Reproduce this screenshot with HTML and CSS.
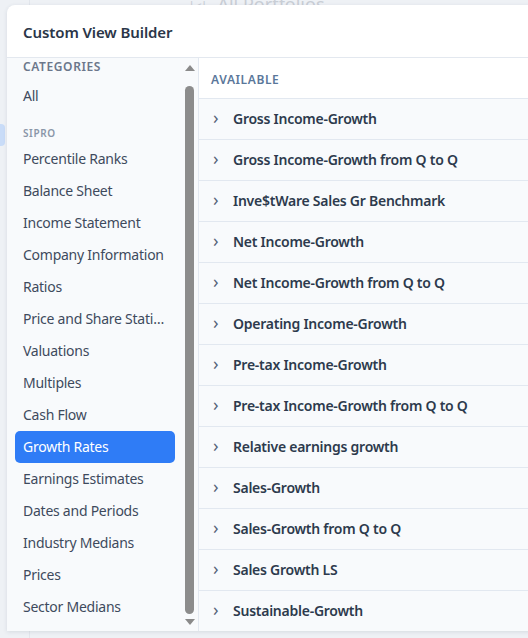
FILE: index.html
```html
<!DOCTYPE html>
<html lang="en">
    <head>
        <title>Custom View Builder</title>
        <meta charset="utf-8">
        <meta name="viewport" content="width=device-width, initial-scale=1">
        <link rel="stylesheet" href="styles.css">
    </head>
    <body>

        <!-- page behind the dialog -->
        <div class="backdrop">
            <div class="back-nav">
                <div class="back-active"></div>
            </div>
            <div class="back-top">
                <span class="back-icon">|&lt;|</span> All Portfolios
            </div>
        </div>

        <div class="modal">
            <div class="modal-header">
                <h2>Custom View Builder</h2>
            </div>
            <div class="modal-body">

                <div class="categories">
                    <div class="cat-list">
                        <div class="cat-title">Categories</div>
                        <a class="cat-item">All</a>
                        <div class="cat-group">Sipro</div>
                        <a class="cat-item">Percentile Ranks</a>
                        <a class="cat-item">Balance Sheet</a>
                        <a class="cat-item">Income Statement</a>
                        <a class="cat-item">Company Information</a>
                        <a class="cat-item">Ratios</a>
                        <a class="cat-item">Price and Share Statistics</a>
                        <a class="cat-item">Valuations</a>
                        <a class="cat-item">Multiples</a>
                        <a class="cat-item">Cash Flow</a>
                        <a class="cat-item active">Growth Rates</a>
                        <a class="cat-item">Earnings Estimates</a>
                        <a class="cat-item">Dates and Periods</a>
                        <a class="cat-item">Industry Medians</a>
                        <a class="cat-item">Prices</a>
                        <a class="cat-item">Sector Medians</a>
                    </div>
                    <!-- scrollbar -->
                    <div class="scroll">
                        <div class="arrow-up"></div>
                        <div class="thumb"></div>
                        <div class="arrow-down"></div>
                    </div>
                </div>

                <div class="available">
                    <div class="avail-title">Available</div>
                    <div class="field"><span class="chev">&#8250;</span>Gross Income-Growth</div>
                    <div class="field"><span class="chev">&#8250;</span>Gross Income-Growth from Q to Q</div>
                    <div class="field"><span class="chev">&#8250;</span>Inve$tWare Sales Gr Benchmark</div>
                    <div class="field"><span class="chev">&#8250;</span>Net Income-Growth</div>
                    <div class="field"><span class="chev">&#8250;</span>Net Income-Growth from Q to Q</div>
                    <div class="field"><span class="chev">&#8250;</span>Operating Income-Growth</div>
                    <div class="field"><span class="chev">&#8250;</span>Pre-tax Income-Growth</div>
                    <div class="field"><span class="chev">&#8250;</span>Pre-tax Income-Growth from Q to Q</div>
                    <div class="field"><span class="chev">&#8250;</span>Relative earnings growth</div>
                    <div class="field"><span class="chev">&#8250;</span>Sales-Growth</div>
                    <div class="field"><span class="chev">&#8250;</span>Sales-Growth from Q to Q</div>
                    <div class="field"><span class="chev">&#8250;</span>Sales Growth LS</div>
                    <div class="field"><span class="chev">&#8250;</span>Sustainable-Growth</div>
                </div>

            </div>
        </div>

    </body>
</html>
```

FILE: styles.css
```css
* {
    box-sizing: border-box;
}
body {
    margin: 0;
    font-family: "Noto Sans", "Liberation Sans", sans-serif;
    background-color: #eef1f5;
    width: 528px;
    height: 638px;
    overflow: hidden;
    position: relative;
}
/* Faded page behind the dialog */
.backdrop {
    display: flex;
    height: 100%;
}
.back-nav {
    width: 30px;
    border-right: 1px solid #e2e6ec;
    padding-top: 124px;
}
.back-active {
    width: 5px;
    height: 22px;
    background-color: #c9dcf8;
    border-radius: 0 4px 4px 0;
}
.back-top {
    margin: -8px 0 0 158px;
    font-size: 18px;
    color: #c9ced6;
}
.back-icon {
    font-size: 13px;
    letter-spacing: -1px;
    margin-right: 6px;
}
/* Dialog */
.modal {
    position: absolute;
    top: 5px;
    left: 7px;
    width: 540px;
    height: 626px;
    background-color: #fff;
    border-radius: 8px 0 0 0;
    box-shadow: 0 1px 4px rgba(40, 55, 80, 0.12);
    display: flex;
    flex-direction: column;
    overflow: hidden;
}
.modal-header {
    height: 53px;
    border-bottom: 1px solid #e3e8ef;
    padding: 2px 16px 0;
    display: flex;
    align-items: center;
}
.modal-header h2 {
    margin: 0;
    font-size: 15px;
    font-weight: 600;
    letter-spacing: -0.1px;
    color: #2b3648;
}
.modal-body {
    flex: 1;
    display: flex;
    min-height: 0;
}
/* Left side: categories */
.categories {
    width: 192px;
    background-color: #f8fafc;
    border-right: 1px solid #e2e8f0;
    display: flex;
}
.cat-list {
    flex: 1;
    overflow: hidden;
}
.cat-title {
    height: 17px;
    line-height: 17px;
    padding: 0 0 0 16px;
    font-size: 12px;
    font-weight: 600;
    letter-spacing: 0.6px;
    text-transform: uppercase;
    color: #6b778b;
}
.cat-item {
    display: block;
    height: 32px;
    line-height: 32px;
    margin: 0 8px;
    padding: 0 8px;
    font-size: 14px;
    letter-spacing: -0.25px;
    color: #3e4a5d;
    white-space: nowrap;
    overflow: hidden;
    text-overflow: ellipsis;
    border-radius: 5px;
}
.cat-title + .cat-item {
    margin-top: 5px;
}
.cat-item.active {
    background-color: #2f7cf6;
    color: #fff;
}
.cat-group {
    padding: 14px 0 2px 16px;
    height: 31px;
    line-height: 14px;
    font-size: 10px;
    font-weight: 600;
    letter-spacing: 0.6px;
    text-transform: uppercase;
    color: #8a96a8;
}
/* Fake scrollbar */
.scroll {
    width: 15px;
    display: flex;
    flex-direction: column;
    align-items: center;
    padding: 7px 2px 6px 0;
}
.arrow-up, .arrow-down {
    width: 0;
    height: 0;
    border-left: 5px solid transparent;
    border-right: 5px solid transparent;
}
.arrow-up {
    border-bottom: 6px solid #8a8a8a;
}
.arrow-down {
    border-top: 6px solid #8a8a8a;
}
.thumb {
    flex: 1;
    width: 9px;
    margin: 15px 0 5px;
    background-color: #8c8c8c;
    border-radius: 5px;
}
/* Right side: available fields */
.available {
    flex: 1;
}
.avail-title {
    height: 41px;
    padding: 2px 12px 0;
    display: flex;
    align-items: center;
    background-color: #fff;
    border-bottom: 1px solid #e2e8f0;
    font-size: 12px;
    font-weight: 600;
    letter-spacing: 0.6px;
    text-transform: uppercase;
    color: #5a779a;
}
.field {
    height: 41px;
    display: flex;
    align-items: center;
    padding: 0 0 2px 14px;
    background-color: #f8fafc;
    border-bottom: 1px solid #e2e8f0;
    font-size: 14px;
    font-weight: 600;
    letter-spacing: -0.25px;
    color: #2d3a4d;
}
.chev {
    width: 20px;
    font-size: 18px;
    font-weight: 400;
    color: #556377;
    margin-top: -3px;
}
```
